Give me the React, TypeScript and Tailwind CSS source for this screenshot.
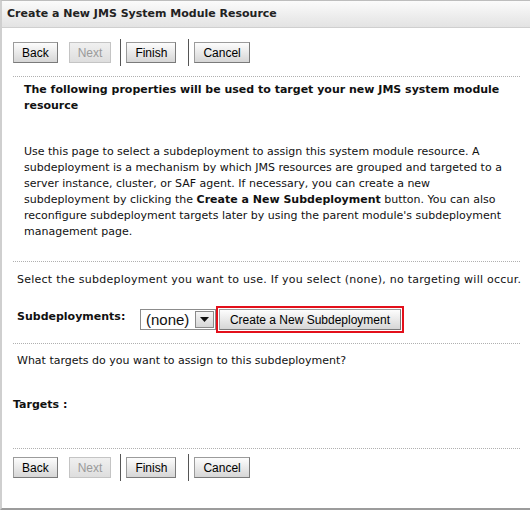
import React from "react";

const verdana = { fontFamily: '"DejaVu Sans", Verdana, Tahoma, sans-serif' };
const arial = { fontFamily: '"Liberation Sans", Arial, sans-serif' };

function Btn({ label, disabled }: { label: string; disabled?: boolean }) {
  return (
    <div
      style={arial}
      className={
        disabled
          ? "h-[21px] px-[8px] flex items-center text-[12px] text-[#9a9a9a] border border-[#c4c4c4] bg-gradient-to-b from-[#f0f0f0] to-[#dedede]"
          : "h-[21px] px-[8px] flex items-center text-[12px] text-black border border-[#9b9b9b] border-r-[#7a7a7a] border-b-[#7a7a7a] bg-gradient-to-b from-[#fdfdfd] to-[#d6d6d6]"
      }
    >
      {label}
    </div>
  );
}

function ButtonRow() {
  return (
    <div className="flex items-center h-[27px]">
      <Btn label="Back" />
      <div className="ml-[11px]">
        <Btn label="Next" disabled />
      </div>
      <div className="ml-[9px] w-px h-[27px] bg-[#555]" />
      <div className="ml-[5px]">
        <Btn label="Finish" />
      </div>
      <div className="ml-[12px] w-px h-[27px] bg-[#555]" />
      <div className="ml-[5px]">
        <Btn label="Cancel" />
      </div>
    </div>
  );
}

function Dotted() {
  return <div className="border-t border-dotted border-[#b0b0b0] h-0" />;
}

export default function App() {
  return (
    <div className="w-[530px] h-[511px] bg-white overflow-hidden text-[#111]" style={verdana}>
      <div className="h-[510px] border-l-2 border-l-[#cfcfcf] border-t border-t-[#bdbdbd] border-b-2 border-b-[#9c9c9c] flex flex-col">
        <div className="h-[27px] shrink-0 bg-gradient-to-b from-[#fbfbfb] to-[#e3e3e3] border-b border-[#cfcfcf] flex items-center pl-[5px] font-bold text-[11px] text-[#222]">
          Create a New JMS System Module Resource
        </div>
        <div className="pl-[11px] pr-[10px] flex flex-col">
          <div className="mt-[11px]">
            <ButtonRow />
          </div>
          <div className="mt-[10px]">
            <Dotted />
          </div>
          <div className="mt-[5px] pl-[11px] pr-[8px] font-bold text-[11px] leading-[16px]">
            The following properties will be used to target your new JMS system module resource
          </div>
          <div className="mt-[30px] pl-[11px] pr-[8px] text-[11px] leading-[16px]">
            Use this page to select a subdeployment to assign this system module resource. A
            subdeployment is a mechanism by which JMS resources are grouped and targeted to a
            server instance, cluster, or SAF agent. If necessary, you can create a new
            subdeployment by clicking the <b>Create a New Subdeployment</b> button. You can also
            reconfigure subdeployment targets later by using the parent module's subdeployment
            management page.
          </div>
          <div className="mt-[21px]">
            <Dotted />
          </div>
          <div className="mt-[10px] pl-[4px] text-[11px] tracking-[0.25px] leading-[16px] whitespace-nowrap">
            Select the subdeployment you want to use. If you select (none), no targeting will occur.
          </div>
          <div className="mt-[18px] pl-[4px] flex items-center h-[27px]">
            <div className="w-[123px] font-bold text-[11px] -mt-[4px]">Subdeployments:</div>
            <div className="h-[21px] w-[76px] border border-[#8c8c8c] bg-white flex items-center justify-between pl-[5px] pr-[1px]" style={arial}>
              <span className="text-[15px] leading-none">(none)</span>
              <div className="w-[19px] h-[17px] bg-gradient-to-b from-[#f6f6f6] to-[#d6d6d6] border border-[#8a8a8a] flex items-center justify-center">
                <svg width="9" height="5" viewBox="0 0 9 5">
                  <polygon points="0,0 9,0 4.5,5" fill="#111" />
                </svg>
              </div>
            </div>
            <div className="border-2 border-[#e3101b] p-[1px]">
              <div
                style={arial}
                className="h-[21px] w-[182px] flex items-center justify-center text-[12px] text-black border border-[#9b9b9b] border-r-[#7a7a7a] border-b-[#7a7a7a] bg-gradient-to-b from-[#fdfdfd] to-[#d6d6d6]"
              >
                Create a New Subdeployment
              </div>
            </div>
          </div>
          <div className="mt-[10px]">
            <Dotted />
          </div>
          <div className="mt-[9px] pl-[4px] text-[11px] leading-[16px]">
            What targets do you want to assign to this subdeployment?
          </div>
          <div className="mt-[28px] font-bold text-[11px] leading-[16px]">Targets :</div>
          <div className="mt-[35px]">
            <Dotted />
          </div>
          <div className="mt-[5px]">
            <ButtonRow />
          </div>
        </div>
      </div>
    </div>
  );
}
